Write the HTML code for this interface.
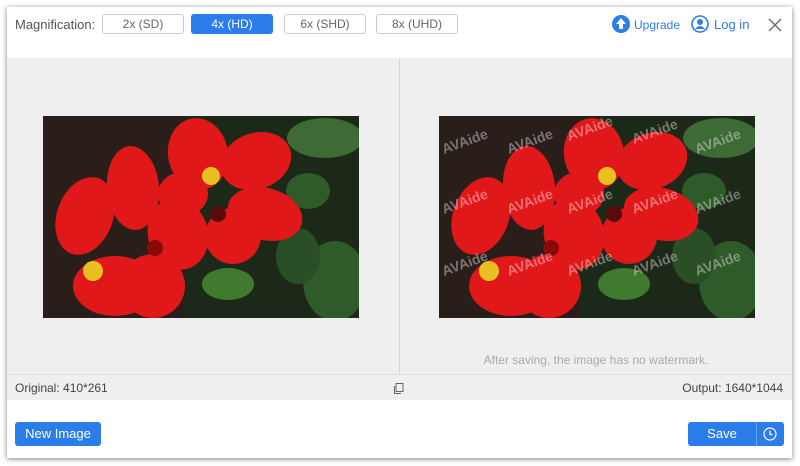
<!DOCTYPE html>
<html><head><meta charset="utf-8"><style>
*{margin:0;padding:0;box-sizing:border-box}
body{width:800px;height:466px;background:#fff;font-family:"Liberation Sans",sans-serif;position:relative;overflow:hidden}
.win{position:absolute;left:7px;top:7px;width:785px;height:451px;background:#fff;box-shadow:0 1px 5px rgba(0,0,0,.5)}
.top{position:absolute;left:0;top:0;width:785px;height:51px;font-size:13px;color:#555}
.btn{position:absolute;top:7px;height:20px;border:1px solid #ccc;border-radius:3px;font-size:12px;color:#666;text-align:center;line-height:18px}
.main{position:absolute;left:0;top:51px;width:785px;height:316px;background:#efefef}
.div{position:absolute;left:392px;top:0;width:1px;height:316px;background:#d8d8d8}
.bar{position:absolute;left:0;top:367px;width:785px;height:26px;background:#efefef;border-top:1px solid #ddd;font-size:12px;color:#444;line-height:26px}
.blue{background:#2b7de9;color:#fff;border-radius:3px;position:absolute;font-size:13px;text-align:center}
svg.img{position:absolute;width:316px;height:202px}
</style></head><body>
<div class="win">
<div class="top">
<span style="position:absolute;left:8px;top:10px">Magnification:</span>
<div class="btn" style="left:95px;width:82px">2x (SD)</div>
<div class="btn" style="left:184px;width:82px;background:#2b7de9;border-color:#2b7de9;color:#fff">4x (HD)</div>
<div class="btn" style="left:277px;width:82px">6x (SHD)</div>
<div class="btn" style="left:369px;width:82px">8x (UHD)</div>
<svg style="position:absolute;left:605px;top:8px" width="18" height="18"><circle cx="9" cy="9" r="9" fill="#2b7de9"/><path d="M9 3 L14 9 H11 V14 H7 V9 H4Z" fill="#fff"/></svg>
<span style="position:absolute;left:627px;top:11px;font-size:12px;color:#2b7de9">Upgrade</span>
<svg style="position:absolute;left:684px;top:8px" width="18" height="18"><circle cx="9" cy="9" r="8" fill="none" stroke="#2b7de9" stroke-width="1.6"/><circle cx="9" cy="7" r="3" fill="#2b7de9"/><path d="M4 14 Q9 8 14 14Z" fill="#2b7de9"/></svg>
<span style="position:absolute;left:707px;top:10px;font-size:13px;color:#2b7de9">Log in</span>
<svg style="position:absolute;left:761px;top:11px" width="14" height="14"><path d="M1 1L13 13M13 1L1 13" stroke="#666" stroke-width="1.3"/></svg>
</div>
<div class="main">
<div class="div"></div>
<svg class="img" style="left:36px;top:58px" viewBox="0 0 316 202"><g id="f">
<rect width="316" height="202" fill="#2a1e1a"/>
<rect x="140" width="176" height="202" fill="#1c2818"/>
<ellipse cx="282" cy="22" rx="38" ry="20" fill="#3d6a35"/>
<ellipse cx="292" cy="165" rx="32" ry="40" fill="#2f5a2a"/>
<ellipse cx="255" cy="140" rx="22" ry="28" fill="#2a4e25"/>
<ellipse cx="185" cy="168" rx="26" ry="16" fill="#3f7a2f"/>
<ellipse cx="265" cy="75" rx="22" ry="18" fill="#2f5a2a"/>
<g fill="#e0181a">
<ellipse cx="155" cy="38" rx="30" ry="36" transform="rotate(-10 155 38)"/><ellipse cx="213" cy="45" rx="36" ry="28" transform="rotate(-20 213 45)"/><ellipse cx="222" cy="98" rx="38" ry="26" transform="rotate(15 222 98)"/><ellipse cx="190" cy="120" rx="28" ry="28"/><ellipse cx="140" cy="78" rx="25" ry="22"/>
<ellipse cx="90" cy="72" rx="26" ry="42" transform="rotate(-5 90 72)"/><ellipse cx="42" cy="100" rx="28" ry="40" transform="rotate(20 42 100)"/><ellipse cx="72" cy="170" rx="42" ry="30"/><ellipse cx="110" cy="170" rx="32" ry="32"/><ellipse cx="135" cy="118" rx="30" ry="36" transform="rotate(-15 135 118)"/>
</g>
<circle cx="168" cy="60" r="9" fill="#e8c020"/>
<circle cx="50" cy="155" r="10" fill="#e8c020"/>
<circle cx="175" cy="98" r="8" fill="#5a0a0a"/>
<circle cx="112" cy="132" r="8" fill="#8a0a0a"/>
</g></svg>
<svg class="img" style="left:432px;top:58px" viewBox="0 0 316 202"><use href="#f"/>
<g fill="rgba(255,255,255,.38)" font-size="14" font-weight="bold" font-family="Liberation Sans">
<text x="5" y="38" transform="rotate(-20 5 38)">AVAide</text><text x="70" y="38" transform="rotate(-20 70 38)">AVAide</text><text x="130" y="25" transform="rotate(-20 130 25)">AVAide</text><text x="195" y="28" transform="rotate(-20 195 28)">AVAide</text><text x="258" y="38" transform="rotate(-20 258 38)">AVAide</text>
<text x="5" y="98" transform="rotate(-20 5 98)">AVAide</text><text x="70" y="98" transform="rotate(-20 70 98)">AVAide</text><text x="130" y="98" transform="rotate(-20 130 98)">AVAide</text><text x="195" y="98" transform="rotate(-20 195 98)">AVAide</text><text x="258" y="98" transform="rotate(-20 258 98)">AVAide</text>
<text x="5" y="160" transform="rotate(-20 5 160)">AVAide</text><text x="70" y="160" transform="rotate(-20 70 160)">AVAide</text><text x="130" y="160" transform="rotate(-20 130 160)">AVAide</text><text x="195" y="160" transform="rotate(-20 195 160)">AVAide</text><text x="258" y="160" transform="rotate(-20 258 160)">AVAide</text>
</g></svg>
<div style="position:absolute;left:393px;width:392px;top:295px;text-align:center;font-size:12px;color:#aaa">After saving, the image has no watermark.</div>
</div>
<div class="bar"><span style="position:absolute;left:8px">Original: 410*261</span>
<svg style="position:absolute;left:387px;top:8px" width="10" height="11"><rect x="2" y=".5" width="7" height="8" fill="none" stroke="#666"/><path d="M.5 3V10.5H7" fill="none" stroke="#666"/></svg>
<span style="position:absolute;right:9px">Output: 1640*1044</span></div>
<div class="blue" style="left:8px;top:415px;width:86px;height:24px;line-height:24px">New Image</div>
<div class="blue" style="left:681px;top:415px;width:96px;height:24px;line-height:24px"><span style="position:absolute;left:0;width:68px;text-align:center">Save</span><div style="position:absolute;left:68px;top:0;width:1px;height:24px;background:#6ba4f0"></div>
<svg style="position:absolute;left:75px;top:5px" width="14" height="14"><circle cx="7" cy="7" r="6" fill="none" stroke="#fff" stroke-width="1.2"/><path d="M7 3.5V7.5H9.5" fill="none" stroke="#fff" stroke-width="1.2"/></svg></div>
</div>
</body></html>
